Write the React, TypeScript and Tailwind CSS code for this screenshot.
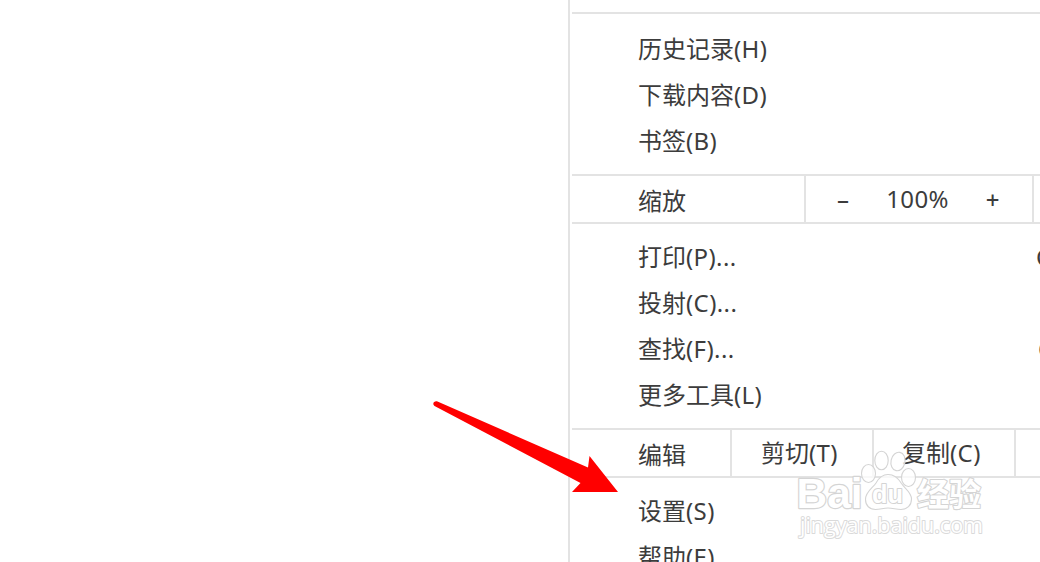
import React from 'react'
import clsx from 'clsx'

type Item = {
  label: string
  hotkey: string
  shortcut?: string
  shortcutClass?: string
}

const history: Item[] = [
  { label: '历史记录', hotkey: '(H)' },
  { label: '下载内容', hotkey: '(D)' },
  { label: '书签', hotkey: '(B)' },
]

const tools: Item[] = [
  { label: '打印', hotkey: '(P)...', shortcut: 'Ctrl+P', shortcutClass: 'ml-[464px]' },
  { label: '投射', hotkey: '(C)...' },
  { label: '查找', hotkey: '(F)...', shortcut: 'Ctrl+F', shortcutClass: 'ml-[466px]' },
  { label: '更多工具', hotkey: '(L)' },
]

const settings: Item[] = [
  { label: '设置', hotkey: '(S)' },
  { label: '帮助', hotkey: '(E)' },
]

function Hotkey({ children }: { children: string }) {
  return <span className="tracking-[0.4px]">{children}</span>
}

function MenuGroup({ items, className }: { items: Item[]; className?: string }) {
  return (
    <div className={clsx('flex flex-col shrink-0', className)}>
      {items.map((item) => (
        <div key={item.label} className="h-[46px] shrink-0 grid items-center">
          <span className="col-start-1 row-start-1 pl-[66px]">
            {item.label}
            <Hotkey>{item.hotkey}</Hotkey>
          </span>
          {item.shortcut && (
            <span className={clsx('col-start-1 row-start-1', item.shortcutClass)}>
              {item.shortcut}
            </span>
          )}
        </div>
      ))}
    </div>
  )
}

function Watermark() {
  return (
    <svg
      className="absolute left-[790px] top-[440px] w-[210px] h-[110px]"
      viewBox="790 440 210 110"
      fill="#ffffff"
      stroke="#d4d4d4"
      strokeWidth="1.1"
      strokeLinejoin="round"
    >
      <g fillOpacity="0.75">
        <ellipse cx="868.5" cy="473.5" rx="7" ry="9" />
        <ellipse cx="881.5" cy="460.5" rx="6.7" ry="9.3" />
        <ellipse cx="898" cy="461.5" rx="7" ry="9.3" transform="rotate(12 898 461.5)" />
        <ellipse cx="908.5" cy="477.5" rx="7" ry="9" />
        <path d="M888 474.5c-6 0-9.500 4-12 8.500-3 5-10.500 8.500-10.500 16.500 0 6 4 10 10 10 5 0 7.500-1.500 12.500-1.500s8 1.500 13 1.500c6 0 10.500-4 10.500-10.500 0-7-6.500-10-10-15.500-3-5-7-9-13.500-9z" />
      </g>
      <g className="font-['Liberation_Sans',sans-serif] font-bold [paint-order:stroke]">
        <text x="796.5" y="507.500" fontSize="42" strokeWidth="2.4" textLength="66" lengthAdjust="spacingAndGlyphs">
          Bai
        </text>
        <text x="872" y="503" fontSize="25" strokeWidth="2" textLength="31" lengthAdjust="spacingAndGlyphs">
          du
        </text>
      </g>
      <text
        x="917"
        y="505.5"
        fontSize="32"
        strokeWidth="2.2"
        className="font-['Noto_Sans_CJK_SC',sans-serif] font-bold [paint-order:stroke]"
      >
        经验
      </text>
      <text
        x="800"
        y="533"
        fontSize="22"
        strokeWidth="2"
        stroke="#dadada"
        textLength="183"
        lengthAdjust="spacingAndGlyphs"
        className="font-['Open_Sans',sans-serif] [paint-order:stroke]"
      >
        jingyan.baidu.com
      </text>
    </svg>
  )
}

export default function App() {
  return (
    <div className="relative w-[1040px] h-[562px] bg-white overflow-hidden flex">
      <div className="w-[568px] shrink-0" />
      <div className="w-[472px] shrink-0 h-full overflow-hidden flex flex-col border-l-2 border-[#e3e3e3] pl-[2px] text-2xl/[46px] text-[#3c3c3c] whitespace-nowrap font-['Noto_Sans','Noto_Sans_CJK_SC',sans-serif]">
        <div className="h-3 shrink-0" />
        <MenuGroup items={history} className="h-[162px] pt-3 border-t-2 border-[#e3e3e3]" />
        <div className="h-[50px] shrink-0 flex border-y-2 border-[#e3e3e3]">
          <div className="w-[232px] shrink-0 pl-[66px] pt-[2px]">缩放</div>
          <div className="w-[230px] shrink-0 flex border-x-2 border-[#e3e3e3]">
            <span className="w-[74px] text-center font-medium">–</span>
            <span className="w-[75px] text-center tracking-[0.4px]">100%</span>
            <span className="w-[75px] text-center pt-px font-medium">+</span>
          </div>
        </div>
        <MenuGroup items={tools} className="h-[204px] pt-[10px]" />
        <div className="h-[50px] shrink-0 flex border-y-2 border-[#e3e3e3]">
          <div className="w-[158px] shrink-0 pl-[66px] pt-[2px]">编辑</div>
          <div className="w-[142px] shrink-0 border-l-2 border-[#e3e3e3] pl-[29px]">
            剪切<Hotkey>(T)</Hotkey>
          </div>
          <div className="w-[142px] shrink-0 border-l-2 border-[#e3e3e3] pl-[28px]">
            复制<Hotkey>(C)</Hotkey>
          </div>
          <div className="w-[26px] shrink-0 border-l-2 border-[#e3e3e3]" />
        </div>
        <MenuGroup items={settings} className="pt-[10px]" />
      </div>
      <Watermark />
      <svg className="absolute left-[430px] top-[396px] w-[192px] h-[100px]" viewBox="430 396 192 100">
        <path
          d="M437.500 401.500L588 467.500L589.500 456L618 492H572L580.500 483L435 406.300C431.500 404 434 400.500 437.500 401.500Z"
          fill="#ff0000"
        />
      </svg>
    </div>
  )
}
